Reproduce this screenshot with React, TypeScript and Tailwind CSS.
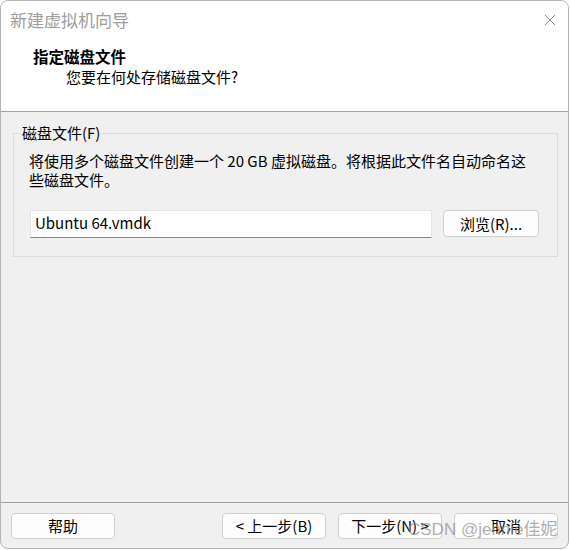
import React from 'react';

const font = "font-['Noto_Sans_CJK_SC','Noto_Sans',sans-serif]";

const WizardButton: React.FC<{ label: string }> = ({ label }) => (
  <button
    type="button"
    className="w-[104px] h-[26px] bg-[#fdfdfd] border border-[#d0d0d0] rounded-[4px] text-[15px] leading-[20px] text-black flex items-center justify-center whitespace-nowrap"
  >
    {label}
  </button>
);

export default function App() {
  return (
    <div className={`w-[570px] h-[550px] bg-white ${font}`}>
      <div className="relative w-[569px] h-[549px] flex flex-col rounded-[8px] border border-[#b4b4b4] overflow-hidden bg-[#f0f0f0]">
        {/* Title bar */}
        <div className="h-[39px] bg-white flex items-center justify-between pl-[9px] pr-[12px]">
          <span className="text-[17px] leading-[22px] text-[#9d9d9d] pb-[1px]">新建虚拟机向导</span>
          <svg width="12" height="12" viewBox="0 0 12 12" className="mb-[2px]">
            <path d="M1 1 L11 11 M11 1 L1 11" stroke="#8c8c8c" strokeWidth="1" fill="none" />
          </svg>
        </div>

        {/* Header */}
        <div className="h-[72px] bg-white border-b border-[#a0a0a0] pl-[32px] pt-[6px]">
          <div className="text-[15.5px] leading-[20px] font-bold text-black">指定磁盘文件</div>
          <div className="text-[15px] leading-[21px] text-black pl-[33px]">您要在何处存储磁盘文件?</div>
        </div>

        {/* Body */}
        <div className="flex-1 pl-[12px]">
          <div className="relative mt-[21px] w-[545px] h-[124px] border border-[#dcdcdc] pl-[15px] pt-[17px]">
            <span className="absolute left-[7px] top-[-11px] px-[1px] bg-[#f0f0f0] text-[15px] leading-[20px] text-black">
              磁盘文件(F)
            </span>
            <div className="text-[15px] leading-[19px] text-black whitespace-nowrap">
              <div>将使用多个磁盘文件创建一个 20 GB 虚拟磁盘。将根据此文件名自动命名这</div>
              <div>些磁盘文件。</div>
            </div>
            <div className="mt-[21px] flex items-start gap-[11px] pl-[1px]">
              <input
                readOnly
                value="Ubuntu 64.vmdk"
                className="w-[402px] h-[28px] bg-white border border-[#e6e6e6] border-b-[#868686] pl-[4px] pb-[3px] text-[15px] text-black outline-none"
              />
              <button
                type="button"
                className="w-[96px] h-[27px] bg-[#fdfdfd] border border-[#d0d0d0] rounded-[4px] text-[15px] leading-[20px] text-black"
              >
                浏览(R)...
              </button>
            </div>
          </div>
        </div>

        {/* Footer */}
        <div className="h-[46px] border-t border-[#a0a0a0] flex items-start justify-between pl-[10px] pr-[10px] pt-[10px]">
          <WizardButton label="帮助" />
          <div className="flex gap-[12px]">
            <WizardButton label="< 上一步(B)" />
            <WizardButton label="下一步(N) >" />
            <WizardButton label="取消" />
          </div>
        </div>

        {/* Watermark */}
        <span className="absolute left-[407px] top-[518px] whitespace-nowrap text-[17px] leading-[22px] text-[#8c8c8c]/70 font-['Liberation_Sans','Noto_Sans_CJK_SC',sans-serif] pointer-events-none">
          CSDN @jennie佳妮
        </span>
      </div>
    </div>
  );
}
